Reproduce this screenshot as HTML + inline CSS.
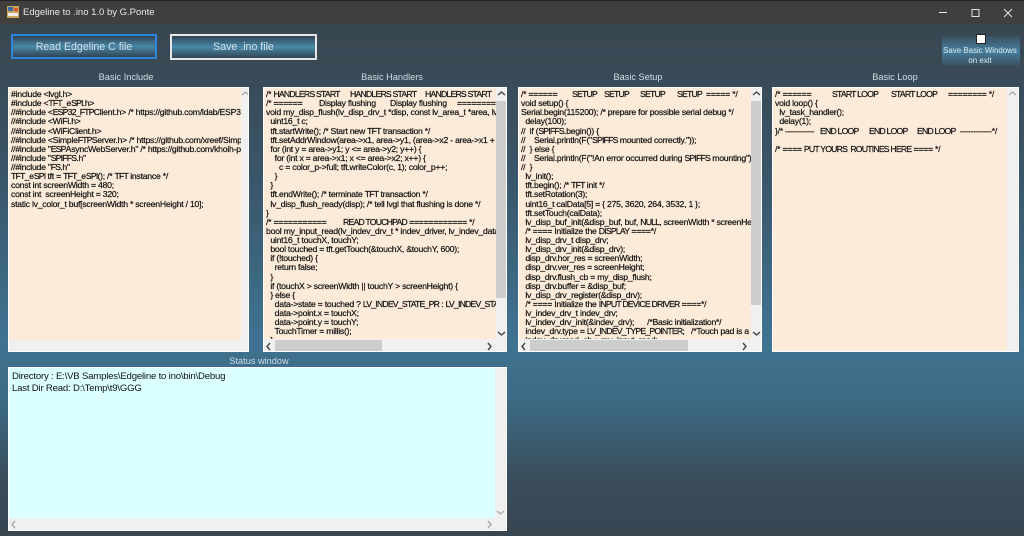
<!DOCTYPE html>
<html><head><meta charset="utf-8"><style>
html,body{margin:0;padding:0}
body{width:1024px;height:536px;overflow:hidden;position:relative;font-family:"Liberation Sans",sans-serif;background:linear-gradient(180deg,#384651 0,#394954 60px,#3a566a 180px,#3f7391 340px,#3d6a84 400px,#3a4d5b 480px,#384651 536px)}
.a{position:absolute}
.tb{left:0;top:0;width:1024px;height:24px;background:#403f3d;border-top:1px solid #222;box-sizing:border-box}
.t{left:23px;top:7px;font-size:9.5px;color:#e8e8e8;white-space:pre}
.btn{box-sizing:border-box;background:linear-gradient(180deg,#2f4452 0,#4a88a8 50%,#2f4452 100%);color:#d5e3ea;text-align:center;font-size:10.6px;line-height:23px}
.lab{font-size:9.2px;color:#d0dde5;text-align:center;white-space:pre}
.box{background:#f0f0f0;border:1px solid #fff;box-sizing:border-box;overflow:hidden}
.c{left:0;top:0;background:#fbebd8;overflow:hidden;white-space:pre;font-size:8.7px;line-height:9.13px;letter-spacing:-.25px;color:#111;padding:2px 0 0 2px;box-sizing:border-box;-webkit-text-stroke:.2px #111}
.k{letter-spacing:-.8px}
.p{position:absolute}
.th{background:#cdcdcd}
svg.ar{position:absolute;fill:none;stroke:#444;stroke-width:1.4}
svg.g{stroke:#aaa}
</style></head><body>
<div class="a tb"></div>
<svg class="a" style="left:7px;top:6px" width="12" height="12"><rect width="12" height="12" fill="#c9a45c"/><rect x="1" y="1" width="5" height="4" fill="#3a6ea8"/><rect x="7" y="2" width="4" height="3" fill="#d9542b"/><rect x="1" y="7" width="10" height="3" fill="#eee"/></svg>
<div class="a t">Edgeline to .ino 1.0 by G.Ponte</div>
<svg class="a" style="left:934px;top:6px" width="90" height="14" fill="none" stroke="#e8e8e8" stroke-width="1"><path d="M5 6.5h8M38 3.5h7v7h-7zM70 3l8 8M78 3l-8 8"/></svg>

<div class="a btn" style="left:11px;top:34px;width:146px;height:25px;border:2px solid #2b86dc">Read Edgeline C file</div>
<div class="a btn" style="left:170px;top:34px;width:147px;height:26px;border:2px solid #e6e6e6">Save .ino file</div>
<div class="a" style="left:942px;top:36px;width:78px;height:30px;background:linear-gradient(180deg,#3a505f 0,#467f9e 50%,#3a505f 100%)"></div>
<div class="a" style="left:976px;top:34px;width:10px;height:10px;background:#fff;border:1px solid #222;box-sizing:border-box"></div>
<div class="a lab" style="left:930px;top:46px;width:100px;font-size:7.9px;line-height:9.5px;color:#dbe8ef">Save Basic Windows
on exit</div>

<div class="a lab" style="left:8px;top:71px;width:236px;margin-top:1px">Basic Include</div>
<div class="a lab" style="left:263px;top:72px;width:258px">Basic Handlers</div>
<div class="a lab" style="left:520px;top:72px;width:236px">Basic Setup</div>
<div class="a lab" style="left:772px;top:72px;width:246px">Basic Loop</div>
<div class="a lab" style="left:1px;top:356px;width:516px">Status window</div>

<div class="a box" style="left:8px;top:87px;width:241px;height:265px">
<div class="a c" style="width:232px;height:252px">#include &lt;lvgl.h&gt;
#include &lt;<span class="k">TFT</span>_e<span class="k">SPI</span>.h&gt;
//#include &lt;<span class="k">ESP32_FTP</span>Client.h&gt; /* https://github.com/ldab/ESP32_FTPClient */
//#include &lt;WiFi.h&gt;
//#include &lt;WiFiClient.h&gt;
//#include &lt;Simple<span class="k">FTP</span>Server.h&gt; /* https://github.com/xreef/SimpleFTPServer */
//#include "<span class="k">ESP</span>AsyncWebServer.h" /* https://github.com/khoih-prog/ */
//#include "<span class="k">SPIFFS</span>.h"
//#include "<span class="k">FS</span>.h"
<span class="k">TFT</span>_e<span class="k">SPI</span> tft = <span class="k">TFT</span>_e<span class="k">SPI</span>(); /* <span class="k">TFT</span> instance */
const int screenWidth = 480;
const int  screenHeight = 320;
static lv_color_t buf[screenWidth * screenHeight / 10];</div>
<svg class="ar g" style="left:232px;top:2px" width="9" height="7"><path d="M1 5l3.5-3 3.5 3"/></svg>
</div>

<div class="a box" style="left:263px;top:87px;width:244px;height:265px">
<div class="a c" style="width:232px;height:251px">/* <span class="k">HANDLERS START</span><span class="p k" style="left:86px">HANDLERS START</span><span class="p k" style="left:161px">HANDLERS START</span>
/* ======<span class="p" style="left:55px">Display flushing</span><span class="p" style="left:126px">Display flushing</span><span class="p" style="left:193px">=========</span>
void my_disp_flush(lv_disp_drv_t *disp, const lv_area_t *area, lv_color_t *color_p) {
  uint16_t c;
  tft.startWrite(); /* Start new <span class="k">TFT</span> transaction */
  tft.setAddrWindow(area-&gt;x1, area-&gt;y1, (area-&gt;x2 - area-&gt;x1 + 1), 0);
  for (int y = area-&gt;y1; y &lt;= area-&gt;y2; y++) {
    for (int x = area-&gt;x1; x &lt;= area-&gt;x2; x++) {
      c = color_p-&gt;full; tft.writeColor(c, 1); color_p++;
    }
  }
  tft.endWrite(); /* terminate <span class="k">TFT</span> transaction */
  lv_disp_flush_ready(disp); /* tell lvgl that flushing is done */
}
/* ===========<span class="p" style="left:79px"><span class="k">READ TOUCHPAD</span> ============ */</span>
bool my_input_read(lv_indev_drv_t * indev_driver, lv_indev_data_t * data) {
  uint16_t touchX, touchY;
  bool touched = tft.getTouch(&amp;touchX, &amp;touchY, 600);
  if (!touched) {
    return false;
  }
  if (touchX &gt; screenWidth || touchY &gt; screenHeight) {
  } else {
    data-&gt;state = touched ? <span class="k">LV_INDEV_STATE_PR</span> : <span class="k">LV_INDEV_STATE_REL</span>;
    data-&gt;point.x = touchX;
    data-&gt;point.y = touchY;
    TouchTimer = millis();
  }</div>
<div class="a th" style="left:232px;top:13px;width:11px;height:197px"></div>
<svg class="ar" style="left:233px;top:2px" width="9" height="7"><path d="M1 5l3.5-3 3.5 3"/></svg>
<svg class="ar" style="left:233px;top:242px" width="9" height="7"><path d="M1 2l3.5 3 3.5-3"/></svg>
<div class="a th" style="left:11px;top:252px;width:107px;height:12px"></div>
<svg class="ar" style="left:1px;top:254px" width="7" height="9"><path d="M5 1l-3 3.5 3 3.5"/></svg>
<svg class="ar" style="left:222px;top:254px" width="7" height="9"><path d="M2 1l3 3.5-3 3.5"/></svg>
</div>

<div class="a box" style="left:518px;top:87px;width:244px;height:265px">
<div class="a c" style="width:232px;height:251px">/* ======<span class="p k" style="left:53px">SETUP</span><span class="p k" style="left:85px">SETUP</span><span class="p k" style="left:121px">SETUP</span><span class="p k" style="left:158px">SETUP</span><span class="p" style="left:187px">===== */</span>
void setup() {
Serial.begin(115200); /* prepare for possible serial debug */
  delay(100);
//  if (<span class="k">SPIFFS</span>.begin()) {
//    Serial.println(F("<span class="k">SPIFFS</span> mounted correctly."));
//  } else {
//    Serial.println(F("!An error occurred during <span class="k">SPIFFS</span> mounting"));
//  }
  lv_init();
  tft.begin(); /* <span class="k">TFT</span> init */
  tft.setRotation(3);
  uint16_t calData[5] = { 275, 3620, 264, 3532, 1 };
  tft.setTouch(calData);
  lv_disp_buf_init(&amp;disp_buf, buf, <span class="k">NULL</span>, screenWidth * screenHeight / 10);
  /* ==== Initialize the <span class="k">DISPLAY</span> ====*/
  lv_disp_drv_t disp_drv;
  lv_disp_drv_init(&amp;disp_drv);
  disp_drv.hor_res = screenWidth;
  disp_drv.ver_res = screenHeight;
  disp_drv.flush_cb = my_disp_flush;
  disp_drv.buffer = &amp;disp_buf;
  lv_disp_drv_register(&amp;disp_drv);
  /* ==== Initialize the <span class="k">INPUT DEVICE DRIVER</span> ====*/
  lv_indev_drv_t indev_drv;
  lv_indev_drv_init(&amp;indev_drv);      /*Basic initialization*/
  indev_drv.type = <span class="k">LV_INDEV_TYPE_POINTER</span>;   /*Touch pad is a pointer*/
  indev_drv.read_cb = my_input_read;</div>
<div class="a th" style="left:232px;top:13px;width:11px;height:204px"></div>
<svg class="ar" style="left:233px;top:2px" width="9" height="7"><path d="M1 5l3.5-3 3.5 3"/></svg>
<svg class="ar" style="left:233px;top:242px" width="9" height="7"><path d="M1 2l3.5 3 3.5-3"/></svg>
<div class="a th" style="left:11px;top:252px;width:158px;height:12px"></div>
<svg class="ar" style="left:1px;top:254px" width="7" height="9"><path d="M5 1l-3 3.5 3 3.5"/></svg>
<svg class="ar" style="left:222px;top:254px" width="7" height="9"><path d="M2 1l3 3.5-3 3.5"/></svg>
</div>

<div class="a box" style="left:772px;top:87px;width:247px;height:265px">
<div class="a c" style="width:234px;height:263px">/* ======<span class="p k" style="left:59px">START LOOP</span><span class="p k" style="left:118px">START LOOP</span><span class="p" style="left:175px">======== */</span>
void loop() {
  lv_task_handler();
  delay(1);
}/* -----------<span class="p k" style="left:47px">END LOOP</span><span class="p k" style="left:96px">END LOOP</span><span class="p k" style="left:144px">END LOOP</span><span class="p" style="left:187px">------------*/</span>

/* ==== <span class="k">PUT YOURS  ROUTINES HERE</span> ==== */</div>
<svg class="ar g" style="left:235px;top:2px" width="9" height="7"><path d="M1 5l3.5-3 3.5 3"/></svg>
</div>

<div class="a box" style="left:8px;top:367px;width:499px;height:164px">
<div class="a" style="left:0;top:0;width:486px;height:150px;background:#dcffff;font-size:9.6px;letter-spacing:-.2px;line-height:12px;color:#111;padding:3px 0 0 3px;box-sizing:border-box;white-space:pre">Directory : E:\VB Samples\Edgeline to ino\bin\Debug
Last Dir Read: D:\Temp\t9\GGG</div>
<svg class="ar g" style="left:1px;top:152px" width="7" height="9"><path d="M5 1l-3 3.5 3 3.5"/></svg>
<svg class="ar g" style="left:477px;top:152px" width="7" height="9"><path d="M2 1l3 3.5-3 3.5"/></svg>
<svg class="ar g" style="left:487px;top:141px" width="9" height="7"><path d="M1 2l3.5 3 3.5-3"/></svg>
</div>
</body></html>
